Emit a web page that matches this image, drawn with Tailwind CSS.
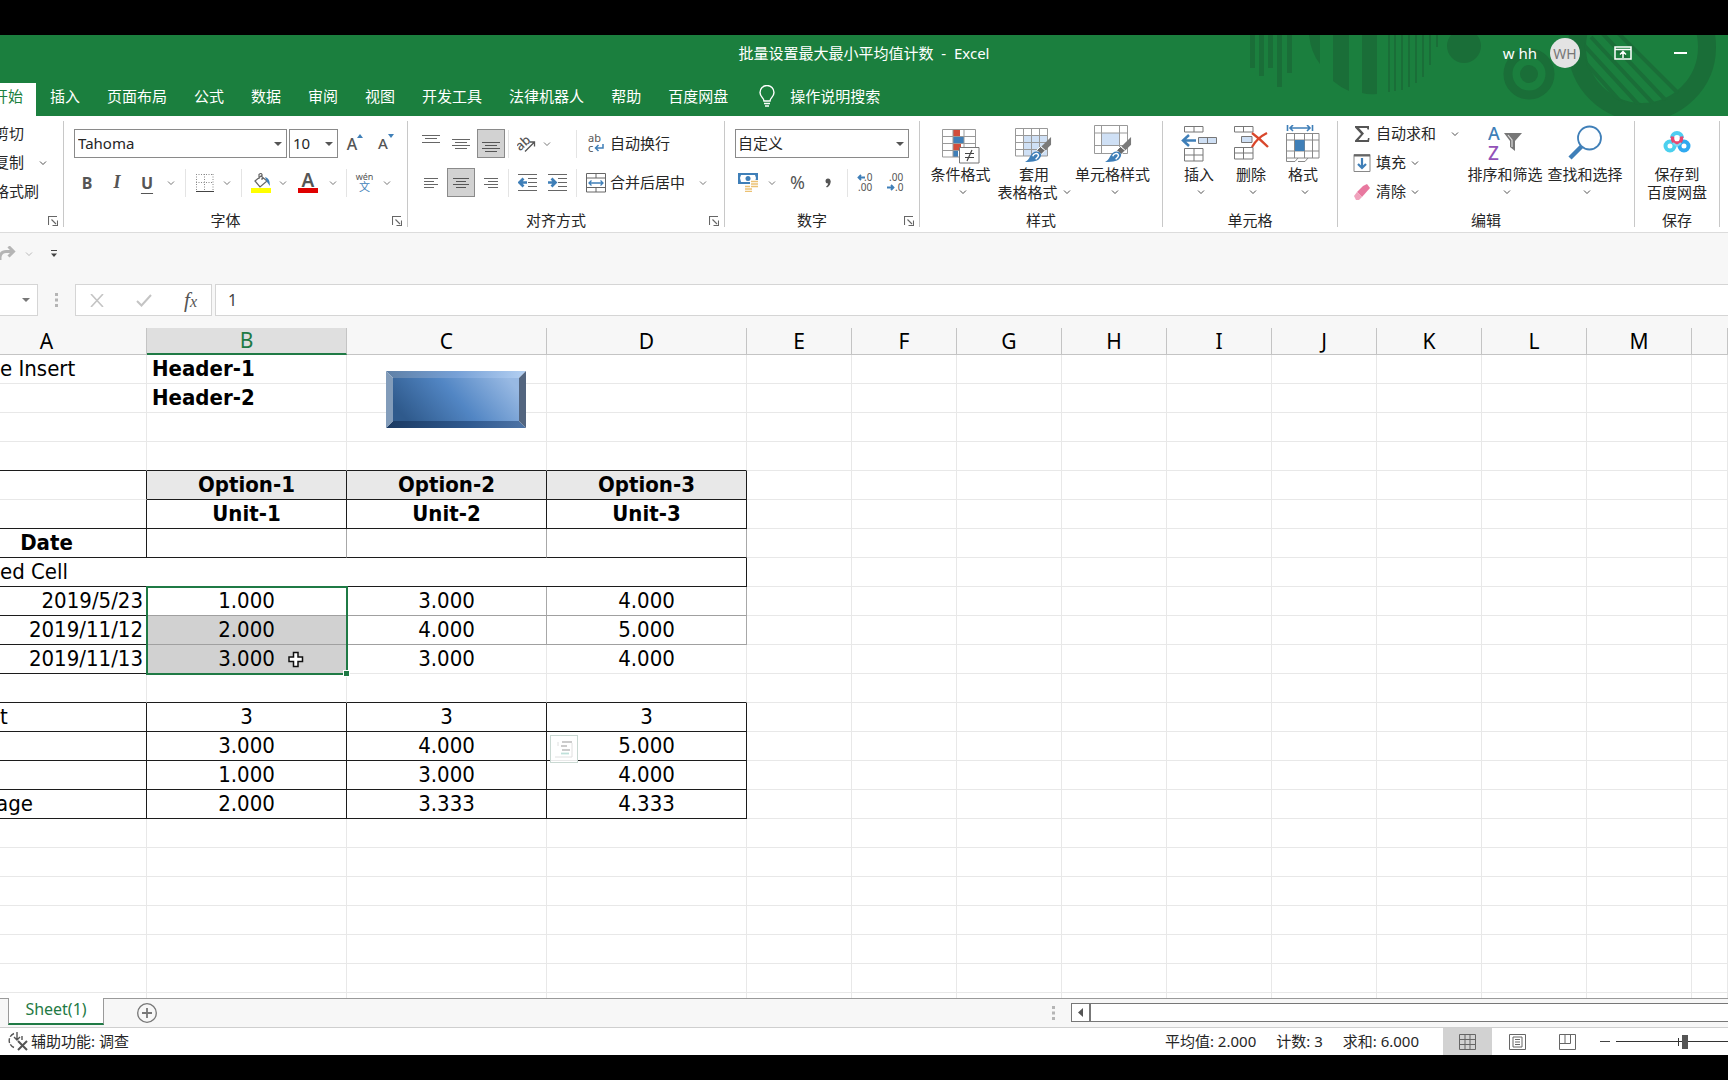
<!DOCTYPE html>
<html lang="zh-CN">
  <head>
    <meta charset="UTF-8" />
    <meta name="viewport" content="width=device-width, initial-scale=1.0" />
    <title>批量设置最大最小平均值计数 - Excel</title>
    <script src="https://cdn.jsdelivr.net/npm/@tailwindcss/browser@4"></script>
  </head>
  <body class="bg-black font-['Noto_Sans','Noto_Sans_CJK_SC',sans-serif] text-[15px] text-[#262626]">
    <!-- shared glyphs -->
    <svg class="hidden">
      <symbol id="chev" viewBox="0 0 8 6"><path d="M1 1.500 4 4.500 7 1.500" fill="none" stroke="currentColor" stroke-width="1" opacity=".8" /></symbol>
      <symbol id="tri" viewBox="0 0 8 4"><path d="M0 0H8L4 4Z" fill="currentColor" /></symbol>
      <symbol id="launch" viewBox="0 0 10 10"><path d="M.5 9V.5H9M3.500 3.500 8 8M9.500 4.500V9.500H4.500" fill="none" stroke="#666" stroke-width="1.1" /></symbol>
      <symbol id="brush" viewBox="0 0 28 28">
        <path d="M27 1v8l-6 6-4-4Z" fill="#7a7a7a" />
        <path d="M16 11l5 4-4 4-5-4Z" fill="#6a6a6a" stroke="#fff" />
        <path d="M12 16c4 0 6 3 4 6-2 4-7 5-16 5 4-2 4-4 6-7 1-2 3-4 6-4Z" fill="#3f7fb8" />
        <path d="M8 21c1-3 5-4 6-1 0 2-2 3-3 4" fill="none" stroke="#fff" stroke-width="1.500" />
      </symbol>
    </svg>

    <div class="flex h-screen flex-col overflow-hidden pt-[35px] pb-[25px]">
      <!-- title bar and tabs -->
      <header class="relative shrink-0 bg-[#1b7f3e] text-white">
        <svg class="absolute top-0 right-0" width="488" height="81" viewBox="0 0 488 81" fill="#1a6e38">
          <path d="M10 0h5v33h-5ZM19 0h5v41h-5ZM28 0h5v33h-5ZM37 0h5v52h-5ZM47 0h5v38h-5ZM69 0h11v29Q71 18 69 0ZM93 0h16v56Q100 52 93 46ZM122 0h15v59q-8 1-15-1Z" />
          <path d="M148 0h2v57h-2ZM154 0h2v56h-2ZM161 0h2v55h-2ZM168 0h2v52h-2ZM175 0h2v48h-2ZM182 0h2v42h-2ZM189 0h2v30h-2ZM196 0h2v12h-2Z" />
          <circle cx="224" cy="11" r="17" />
          <circle cx="289" cy="39" r="21" fill="none" stroke="#1a6e38" stroke-width="9" />
          <circle cx="289" cy="39" r="9" />
          <clipPath id="disc"><circle cx="402" cy="12" r="58" /></clipPath>
          <circle cx="402" cy="12" r="65" fill="none" stroke="#1a6e38" stroke-width="18" />
          <path d="M335 16 396 84M342 8 408 80M351 2 420 76M362-2 432 72M376-4 444 64" clip-path="url(#disc)" stroke="#1a6e38" stroke-width="4" />
        </svg>
        <div class="relative grid h-[48px] grid-cols-[1fr_auto_1fr] pb-3">
          <span></span>
          <h1 class="self-center whitespace-pre">批量设置最大最小平均值计数  -  Excel</h1>
          <div class="flex items-center justify-end pr-[41px]">
            <span>w hh</span>
            <span class="ml-[13px] flex size-[30px] items-center justify-center rounded-full bg-[#e3e3e3] text-[14px] text-[#777]">WH</span>
            <button class="ml-[34px]" aria-label="功能区显示选项">
              <svg width="18" height="14" viewBox="0 0 18 14" fill="none" stroke="#fff" stroke-width="1.500"><path d="M1 1H17V13H1ZM1 3.500H17M9 12V6M6 8.500 9 5.500 12 8.500" /></svg>
            </button>
            <button class="ml-[42px] h-[2px] w-[13px] bg-white" aria-label="最小化"></button>
          </div>
        </div>
        <nav class="relative flex h-[33px] items-start gap-[27px] leading-[26px] whitespace-nowrap">
          <a href="#" class="-mr-[13px] flex h-full w-[36px] overflow-hidden bg-white text-[#1b7f3e]"><span class="-ml-[7px]">开始</span></a>
          <a href="#">插入</a>
          <a href="#">页面布局</a>
          <a href="#">公式</a>
          <a href="#">数据</a>
          <a href="#">审阅</a>
          <a href="#">视图</a>
          <a href="#">开发工具</a>
          <a href="#">法律机器人</a>
          <a href="#">帮助</a>
          <a href="#">百度网盘</a>
          <a href="#" class="ml-[4px] flex items-center gap-[15px]">
            <svg width="16" height="22" viewBox="0 0 16 22" fill="none" stroke="#fff" stroke-width="1.400"><path d="M5 16c0-3-4-4-4-8.500a7 7 0 0 1 14 0C15 12 11 13 11 16ZM5 18.500H11M6 21H10" /></svg>
            操作说明搜索
          </a>
        </nav>
      </header>

      <!-- ribbon -->
      <div class="flex h-[117px] shrink-0 border-b border-[#dcdcdc] bg-white pt-[5px] whitespace-nowrap text-[#262626]">
        <section class="flex h-[106px] w-[64px] shrink-0 flex-col overflow-hidden border-r border-[#c8c8c8]">
          <div class="-mt-[2px] -ml-[6px] flex flex-col items-start leading-[29px]">
            <button>剪切</button>
            <button class="flex items-center">复制<svg class="ml-[15px]" width="8" height="6"><use href="#chev" /></svg></button>
            <button>格式刷</button>
          </div>
          <div class="mt-auto flex h-[12px] justify-end"><button class="flex w-[20px] items-center justify-center" aria-label="剪贴板设置"><svg width="10" height="10"><use href="#launch" /></svg></button></div>
        </section>

        <section class="flex h-[106px] w-[344px] shrink-0 flex-col border-r border-[#c8c8c8] pt-2">
          <div class="flex h-[29px] gap-[2px] pl-[10px]">
            <label class="relative w-[213px]">
              <select class="size-full appearance-none border border-[#8a8a8a] px-[3px]" aria-label="字体"><option>Tahoma</option></select>
              <svg class="absolute top-[13px] right-[5px] text-[#555]" width="8" height="4"><use href="#tri" /></svg>
            </label>
            <label class="relative w-[49px]">
              <select class="size-full appearance-none border border-[#8a8a8a] px-[3px]" aria-label="字号"><option>10</option></select>
              <svg class="absolute top-[13px] right-[5px] text-[#555]" width="8" height="4"><use href="#tri" /></svg>
            </label>
            <button class="flex w-[30px] items-center justify-center text-[16px] font-medium text-[#555]" aria-label="增大字号">A<svg class="mb-4" width="6" height="4"><path d="M0 4 3 0 6 4Z" fill="#3f7fb8" /></svg></button>
            <button class="flex w-[28px] items-center justify-center text-[15px] font-medium text-[#555]" aria-label="减小字号">A<svg class="mb-4" width="6" height="4"><path d="M0 0H6L3 4Z" fill="#3f7fb8" /></svg></button>
          </div>
          <div class="mt-[10px] flex h-[29px] items-center pl-2 text-[#555]">
            <button class="w-[30px] text-[16px] font-bold">B</button>
            <button class="w-[30px] font-['Liberation_Serif',serif] text-[18px] font-bold italic">I</button>
            <button class="w-[30px] text-[16px] font-bold underline underline-offset-4">U</button>
            <button class="flex w-[18px] justify-center" aria-label="下划线样式"><svg width="8" height="6"><use href="#chev" /></svg></button>
            <span class="mx-[5px] h-[28px] w-px bg-[#e4e4e4]"></span>
            <button class="flex w-[27px] justify-center" aria-label="边框"><svg width="18" height="18" fill="none" stroke="#888"><path d="M.5 0V17M8.500 0V17M17 0V17M0 .5H17M0 8.500H17" stroke-dasharray="1 1.500" /><path d="M0 17.500H18" stroke="#444" /></svg></button>
            <button class="flex w-[18px] justify-center" aria-label="边框样式"><svg width="8" height="6"><use href="#chev" /></svg></button>
            <span class="mx-[5px] h-[28px] w-px bg-[#e4e4e4]"></span>
            <button class="flex w-[27px] justify-center" aria-label="填充颜色"><svg width="20" height="20"><path d="M4 8 10 3 16 8 9 14ZM8 6V1.500q2-2 3 0V7" fill="#fff" stroke="#666" stroke-width="1.200" /><path d="M14 4q5 1 5 9l-3-4Z" fill="#3f7fb8" /><path d="M0 15H20V20H0Z" fill="#ff0" /></svg></button>
            <button class="flex w-[18px] justify-center" aria-label="填充颜色选项"><svg width="8" height="6"><use href="#chev" /></svg></button>
            <button class="flex w-[32px] flex-col items-center text-[19px] leading-[15px] font-semibold" aria-label="字体颜色">A<span class="h-[5px] w-[20px] bg-[#e00000]"></span></button>
            <button class="flex w-[18px] justify-center" aria-label="字体颜色选项"><svg width="8" height="6"><use href="#chev" /></svg></button>
            <span class="mx-[4px] h-[28px] w-px bg-[#e4e4e4]"></span>
            <button class="flex w-[27px] flex-col items-center text-[9px] leading-[8px]" aria-label="拼音指南">wén<span class="text-[11px] leading-[11px] text-[#3f7fb8]">文</span></button>
            <button class="flex w-[18px] justify-center" aria-label="拼音选项"><svg width="8" height="6"><use href="#chev" /></svg></button>
          </div>
          <div class="mt-auto flex h-[12px] text-center leading-[10px]"><h2 class="flex-1">字体</h2><button class="flex w-[20px] items-center justify-center" aria-label="字体设置"><svg width="10" height="10"><use href="#launch" /></svg></button></div>
        </section>

        <section class="flex h-[106px] w-[317px] shrink-0 flex-col border-r border-[#c8c8c8] pt-2">
          <div class="flex h-[29px] items-center pl-[9px] text-[#555]">
            <button class="mr-[2px] flex size-[28px] justify-center pt-[5px]" aria-label="顶端对齐"><svg width="18" height="10" stroke="#666"><path d="M0 .5H18M3 3.500H15M0 7.500H18" /></svg></button>
            <button class="mr-[2px] flex size-[28px] items-center justify-center" aria-label="垂直居中"><svg width="18" height="10" stroke="#666"><path d="M0 .5H18M3 3.500H15M0 6.500H18M3 9.500H15" /></svg></button>
            <button class="flex h-[29px] w-[28px] items-end justify-center border border-[#8a8a8a] bg-[#d2d2d2] pb-[5px]" aria-label="底端对齐"><svg width="18" height="10" stroke="#555"><path d="M0 .5H18M3 3.500H15M0 6.500H18M3 9.500H15" /></svg></button>
            <span class="mr-1 ml-[3px] h-[28px] w-px bg-[#e4e4e4]"></span>
            <button class="flex w-[28px] justify-center" aria-label="方向"><svg width="20" height="18"><text x="0" y="13" transform="rotate(-42 6 11)" font-size="13" font-weight="500" fill="#555">ab</text><path d="M8 16.500 17 7.500M13 7H17.500V11.500" fill="none" stroke="#555" stroke-width="1.300" /></svg></button>
            <button class="flex w-[12px] justify-center" aria-label="方向选项"><svg width="8" height="6"><use href="#chev" /></svg></button>
            <span class="mr-[9px] ml-[23px] h-[28px] w-px bg-[#e4e4e4]"></span>
            <button class="flex items-center gap-1 text-[#262626]"><svg width="20" height="20"><text x="2" y="8" font-size="11" fill="#555">ab</text><text x="2" y="18" font-size="11" fill="#555">c</text><path d="M17 10v4H10M12.500 11 9.500 14 12.500 17" fill="none" stroke="#3f7fb8" stroke-width="1.500" /></svg>自动换行</button>
          </div>
          <div class="mt-[10px] flex h-[29px] items-center pl-[9px] text-[#555]">
            <button class="mr-[2px] flex w-[28px] justify-center" aria-label="左对齐"><svg width="14" height="10" stroke="#666"><path d="M0 .5H14M0 3.500H10M0 6.500H14M0 9.500H10" /></svg></button>
            <button class="mr-[2px] flex h-[29px] w-[28px] items-center justify-center border border-[#8a8a8a] bg-[#d2d2d2]" aria-label="居中"><svg width="16" height="10" stroke="#555"><path d="M0 .5H16M3 3.500H13M0 6.500H16M3 9.500H13" /></svg></button>
            <button class="flex w-[28px] justify-center" aria-label="右对齐"><svg width="14" height="10" stroke="#666"><path d="M0 .5H14M4 3.500H14M0 6.500H14M4 9.500H14" /></svg></button>
            <span class="mr-1 ml-[3px] h-[28px] w-px bg-[#e4e4e4]"></span>
            <button class="mr-[2px] flex w-[28px] justify-center" aria-label="减少缩进"><svg width="19" height="17" stroke="#666"><path d="M0 .5H19M10 4.500H19M10 8.500H19M10 12.500H19M0 16.500H19" /><path d="M9 8.500H3M5.500 4.500 1.500 8.500 5.500 12.500" fill="none" stroke="#3f7fb8" stroke-width="2.700" /></svg></button>
            <button class="flex w-[28px] justify-center" aria-label="增加缩进"><svg width="19" height="17" stroke="#666"><path d="M0 .5H19M10 4.500H19M10 8.500H19M10 12.500H19M0 16.500H19" /><path d="M0 8.500H6M3.500 4.500 7.500 8.500 3.500 12.500" fill="none" stroke="#3f7fb8" stroke-width="2.700" /></svg></button>
            <span class="mr-[9px] ml-[5px] h-[28px] w-px bg-[#e4e4e4]"></span>
            <button class="flex items-center gap-1 text-[#262626]"><svg width="20" height="20" fill="none" stroke="#666"><path d="M.5 .5H19.500V19H.5ZM.5 5H19.500M.5 14.500H19.500M10 .5V5M10 14.500V19" /><path d="M3 10H17M5.500 7.500 3 10 5.500 12.500M14.500 7.500 17 10 14.500 12.500" stroke="#3f7fb8" stroke-width="1.300" /></svg>合并后居中</button>
            <button class="ml-[14px]" aria-label="合并选项"><svg width="8" height="6"><use href="#chev" /></svg></button>
          </div>
          <div class="mt-auto flex h-[12px] text-center leading-[10px]"><h2 class="flex-1">对齐方式</h2><button class="flex w-[20px] items-center justify-center" aria-label="对齐设置"><svg width="10" height="10"><use href="#launch" /></svg></button></div>
        </section>

        <section class="flex h-[106px] w-[195px] shrink-0 flex-col border-r border-[#c8c8c8] pt-2">
          <label class="relative ml-[10px] h-[29px] w-[174px]">
            <select class="size-full appearance-none border border-[#8a8a8a] px-[2px]" aria-label="数字格式"><option>自定义</option></select>
            <svg class="absolute top-[13px] right-[5px] text-[#555]" width="8" height="4"><use href="#tri" /></svg>
          </label>
          <div class="mt-[10px] flex h-[29px] items-center pl-[9px] text-[#555]">
            <button class="flex w-[28px] justify-center" aria-label="会计数字格式"><svg width="20" height="19"><path d="M0 0H20V11H0Z" fill="#3f7fb8" /><path d="M3 2H17L18 5 17 9H3L2 5Z" fill="#fff" /><circle cx="10" cy="5.500" r="2.500" fill="#3f7fb8" /><path d="M12 7H20V17H14V19H6V12H12Z" fill="#fff" /><path d="M13 8.500H20M13 11H20M13 13.500H20M7 13.500H12M7 16H14M7 18.500H14" stroke="#ecc173" stroke-width="1.500" /></svg></button>
            <button class="flex w-[20px] justify-center" aria-label="会计格式选项"><svg width="8" height="6"><use href="#chev" /></svg></button>
            <button class="w-[31px] text-[18px]">%</button>
            <button class="flex w-[29px] justify-center" aria-label="千位分隔"><svg width="6" height="10"><circle cx="3" cy="3" r="2.500" fill="#555" /><path d="M5.500 3Q6 7 2 9.500L1 8.500Q3.500 7 3 4Z" fill="#555" /></svg></button>
            <span class="mr-[3px] ml-[5px] h-[28px] w-px bg-[#e4e4e4]"></span>
            <button class="mr-[2px] flex w-[28px] justify-center" aria-label="增加小数位数"><svg width="16" height="20" font-size="10" fill="#555"><text x="7" y="8">.0</text><text x="1" y="18">.00</text><path d="M8 4.500H2M4 2 1.500 4.500 4 7" fill="none" stroke="#3f7fb8" stroke-width="1.800" /></svg></button>
            <button class="flex w-[28px] justify-center" aria-label="减少小数位数"><svg width="17" height="20" font-size="10" fill="#555"><text x="2" y="8">.00</text><text x="8" y="18">.0</text><path d="M0 14.500H6M4 12 6.500 14.500 4 17" fill="none" stroke="#3f7fb8" stroke-width="1.800" /></svg></button>
          </div>
          <div class="mt-auto flex h-[12px] text-center leading-[10px]"><h2 class="flex-1">数字</h2><button class="flex w-[20px] items-center justify-center" aria-label="数字设置"><svg width="10" height="10"><use href="#launch" /></svg></button></div>
        </section>

        <section class="flex h-[106px] w-[243px] shrink-0 flex-col border-r border-[#c8c8c8] pt-1">
          <div class="flex pl-[4px] leading-[18px]">
            <button class="flex w-[73px] flex-col items-center">
              <svg width="38" height="40" viewBox="0 0 38 40"><path d="M.5 4.500H34V32H.5Z" fill="#fff" /><path d="M11 4H18V11H11ZM11 18H19V25H11Z" fill="#d24e3c" /><path d="M11 11H22V18H11ZM11 25H16V32H11Z" fill="#3f7fb8" /><path d="M.5 4.500H33.500V32H.5ZM.5 11.500H33.500M.5 18.500H33.500M.5 25.500H33.500M11 4V32M22 4V32" fill="none" stroke="#999" /><path d="M17.500 22.500H37V38H17.500Z" fill="#fff" stroke="#777" /><path d="M23 28.500H32M23 32.500H32M30 25 25 36" stroke="#444" stroke-width="1.200" /></svg>
              条件格式
              <span class="flex h-[18px] items-center pl-1"><svg width="8" height="6"><use href="#chev" /></svg></span>
            </button>
            <button class="flex w-[74px] flex-col items-center">
              <svg width="38" height="40" viewBox="0 0 38 40"><path d="M8.500 10H32V31H8.500Z" fill="#cfe0f5" /><path d="M.5 3.500H32.500V31H.5ZM.5 10.500H32.500M.5 17.500H32.500M.5 24.500H32.500M8.500 4V31M16.500 4V31M24.500 4V31" fill="none" stroke="#999" /><use href="#brush" x="10" y="11" width="27" height="27" /></svg>
              套用
              <span class="flex h-[18px] items-center gap-[5px]">表格格式<svg width="8" height="6"><use href="#chev" /></svg></span>
            </button>
            <button class="flex w-[83px] flex-col items-center">
              <svg width="38" height="40" viewBox="0 0 38 40"><path d="M7 8H25V20H7Z" fill="#cfe0f5" /><path d="M.5 .5H33.500V28.500H.5ZM.5 8H33.500M.5 20.500H33.500M7.500 0V28M25.500 0V28" fill="none" stroke="#999" /><use href="#brush" x="11" y="11" width="27" height="27" /></svg>
              单元格样式
              <span class="flex h-[18px] items-center pl-1"><svg width="8" height="6"><use href="#chev" /></svg></span>
            </button>
          </div>
          <h2 class="mt-auto pb-[2px] text-center leading-[10px]">样式</h2>
        </section>

        <section class="flex h-[106px] w-[175px] shrink-0 flex-col border-r border-[#c8c8c8] pt-1">
          <div class="flex pl-[10px] leading-[18px]">
            <button class="flex w-[52px] flex-col items-center">
              <svg width="36" height="40" viewBox="0 0 36 40" fill="none" stroke="#777"><path d="M3.500 1.500H22V7H3.500ZM13 1.500V7M3.500 23.500H22V36H3.500ZM13 23.500V36M3.500 30H22" /><path d="M17.500 12.500H35.500V18.500H17.500ZM26.500 12.500V18.500" fill="#cfe0f5" /><path d="M15 15.500H2M8 10 2 15.500 8 21" stroke="#3f7fb8" stroke-width="2.500" /></svg>
              插入
              <span class="flex h-[18px] items-center pl-1"><svg width="8" height="6"><use href="#chev" /></svg></span>
            </button>
            <button class="flex w-[52px] flex-col items-center">
              <svg width="36" height="40" viewBox="0 0 36 40" fill="none" stroke="#777"><path d="M1.500 1.500H20V7H1.500ZM10.500 1.500V7M1.500 22.500H20V34H1.500ZM10.500 22.500V34M1.500 28H20" /><path d="M8.500 11.500H19V17.500H8.500Z" fill="#cfe0f5" /><path d="M19 8Q27 14 35 22M34 8Q24 13 19 22" stroke="#d9472b" stroke-width="2.300" /></svg>
              删除
              <span class="flex h-[18px] items-center pl-1"><svg width="8" height="6"><use href="#chev" /></svg></span>
            </button>
            <button class="flex w-[52px] flex-col items-center">
              <svg width="36" height="40" viewBox="0 0 36 40" fill="none" stroke="#888"><path d="M1.500 8.500H34V33H1.500ZM1.500 15H34M1.500 26H34M9.500 8.500V33M19.500 8.500V33M27.500 8.500V33M1.500 33V36.500H10L13 33M13 36.500H20L23 33" /><path d="M10 15H19.500V26H10Z" fill="#3f7fb8" stroke="none" /><path d="M2.500 0V6M27.500 0V6M5 3H25M8 0 5 3 8 6M22 0 25 3 22 6" stroke="#3f7fb8" stroke-width="1.600" /></svg>
              格式
              <span class="flex h-[18px] items-center pl-1"><svg width="8" height="6"><use href="#chev" /></svg></span>
            </button>
          </div>
          <h2 class="mt-auto pb-[2px] text-center leading-[10px]">单元格</h2>
        </section>

        <section class="flex h-[106px] w-[297px] shrink-0 flex-col border-r border-[#c8c8c8]">
          <div class="flex pl-[15px]">
            <div class="-mt-[2px] flex w-[112px] flex-col items-start leading-[29px]">
              <button class="flex items-center gap-[5px]"><svg width="18" height="18"><path d="M2 1H16V4.500H14.500L14 3H6L11 8.500 5.500 15H14.500L15 13H16.500L16 17H2V15.500L8 9 2 2.500Z" fill="#555" /></svg>自动求和<svg class="ml-[10px]" width="8" height="6"><use href="#chev" /></svg></button>
              <button class="flex items-center gap-[5px]"><svg width="18" height="18" fill="none"><path d="M1 .5H17V17.500H1Z" stroke="#888" /><path d="M1 1.500H17" stroke="#666" stroke-width="2" /><path d="M9 4V14M5 10 9 14 13 10" stroke="#3f7fb8" stroke-width="2.200" /></svg>填充<svg width="8" height="6"><use href="#chev" /></svg></button>
              <button class="flex items-center gap-[5px]"><svg width="18" height="16"><path d="M10 2 14 0 17 4 9 13 4 8Z" fill="#e8789f" /><path d="M4 8 9 13 6 16H3L1 12Z" fill="#f0a3bd" /></svg>清除<svg width="8" height="6"><use href="#chev" /></svg></button>
            </div>
            <div class="flex pt-1 leading-[18px]">
              <button class="flex w-[80px] flex-col items-center">
                <svg width="34" height="40" viewBox="0 0 34 40"><text x="0" y="15" font-size="18" font-weight="500" fill="#3f7fb8">A</text><text x="0" y="35" font-size="19" font-weight="500" fill="#9352b8">Z</text><path d="M16 8H34L27 16V26L22 22V16Z" fill="#777" /><path d="M20 10 24 15V22" fill="none" stroke="#ddd" stroke-width="1.200" /></svg>
                排序和筛选
                <span class="flex h-[18px] items-center pl-1"><svg width="8" height="6"><use href="#chev" /></svg></span>
              </button>
              <button class="flex w-[80px] flex-col items-center">
                <svg width="34" height="40" viewBox="0 0 34 40" fill="none" stroke="#3f7fb8"><circle cx="21.500" cy="13" r="11.500" fill="#fdfeff" stroke-width="1.800" /><path d="M13.500 21.500 2 33" stroke-width="4.500" /></svg>
                查找和选择
                <span class="flex h-[18px] items-center pl-1"><svg width="8" height="6"><use href="#chev" /></svg></span>
              </button>
            </div>
          </div>
          <h2 class="mt-auto pb-[2px] text-center leading-[10px]">编辑</h2>
        </section>

        <section class="flex h-[106px] w-[85px] shrink-0 flex-col items-center border-r border-[#c8c8c8] pt-1">
          <button class="flex flex-col items-center leading-[18px]">
            <svg width="28" height="40" viewBox="0 0 28 40" fill="none" stroke-width="4"><path d="M9 13A5 5 0 0 1 19 13" stroke="#4fcdf0" /><circle cx="7" cy="21" r="4.500" stroke="#4bd0ee" /><circle cx="21" cy="21" r="4.500" stroke="#2fa9f0" /><path d="M9.500 11.500Q9 18 14 18T18.500 11.500" stroke="#e8476f" stroke-width="3.500" /><path d="M10 18 14 21 18 18" stroke="#7fd8f2" stroke-width="2" /></svg>
            <span>保存到</span>
            <span>百度网盘</span>
          </button>
          <h2 class="mt-auto pb-[2px] leading-[10px]">保存</h2>
        </section>
      </div>

      <!-- quick access and formula bar -->
      <div class="shrink-0 bg-[#f7f7f7] pb-3">
        <div class="flex h-[51px] items-center pb-[10px]">
          <button aria-label="恢复"><svg width="16" height="16" fill="none" stroke="#b5b5b5" stroke-width="3"><path d="M0 14V11Q1 5.500 6 5.500H13M8.500 .5 13.500 5.500 8.500 10.500" /></svg></button>
          <button class="ml-[9px] text-[#aaa]" aria-label="恢复列表"><svg width="8" height="6"><use href="#chev" /></svg></button>
          <button class="ml-[18px]" aria-label="自定义快速访问工具栏"><svg width="6" height="8" fill="#444"><path d="M0 0H6V1H0ZM0 3.500H6L3 7Z" /></svg></button>
        </div>
        <div class="flex h-[32px]">
          <label class="relative w-[38px]">
            <input class="size-full border border-l-0 border-[#d5d5d5] bg-white" aria-label="名称框" />
            <svg class="absolute top-[14px] right-[8px] text-[#777]" width="8" height="4"><use href="#tri" /></svg>
          </label>
          <svg class="mx-[17px] self-center" width="3" height="14" fill="#b5b5b5"><path d="M0 0H3V3H0ZM0 5.500H3V8.500H0ZM0 11H3V14H0Z" /></svg>
          <div class="mr-[3px] flex w-[137px] items-center justify-between border border-[#d5d5d5] bg-white px-[14px]">
            <button aria-label="取消"><svg width="14" height="13" stroke="#c4c4c4" stroke-width="1.600"><path d="M1 0 13 13M13 0 1 13" /></svg></button>
            <button aria-label="输入"><svg width="16" height="13" fill="none" stroke="#c4c4c4" stroke-width="2"><path d="M1 7 5.500 11.500 15 1" /></svg></button>
            <button class="font-['Liberation_Serif',serif] text-[21px] leading-none text-[#555] italic">f<span class="text-[16px]">x</span></button>
          </div>
          <input class="min-w-0 flex-1 border border-r-0 border-[#d5d5d5] bg-white px-[12px] text-[16px] text-[#444]" aria-label="编辑栏" value="1" />
        </div>
      </div>

      <!-- worksheet -->
      <main class="relative min-h-0 flex-1 overflow-hidden bg-white font-['DejaVu_Sans_Condensed','DejaVu_Sans',sans-serif] text-[22px] text-black">
        <table class="w-full table-fixed border-separate border-spacing-0 leading-[26px]">
          <colgroup id="cols"></colgroup>
          <thead class="bg-[#f7f7f7] font-['Noto_Sans',sans-serif] text-[21px] leading-[25px]"><tr id="head"></tr></thead>
          <tbody id="body"></tbody>
        </table>
        <!-- bevelled shape on column C -->
        <button class="absolute top-[43px] left-[386px]" aria-label="按钮">
          <svg width="140" height="57" viewBox="0 0 140 57">
            <defs>
              <linearGradient id="face" x1="0" y1=".6" x2="1" y2=".3"><stop offset="0" stop-color="#2f5a8c" /><stop offset=".5" stop-color="#5286c4" /><stop offset="1" stop-color="#98b9e3" /></linearGradient>
              <linearGradient id="lit"><stop offset="0" stop-color="#5f80a6" /><stop offset=".5" stop-color="#76a0d6" /><stop offset="1" stop-color="#b4d0f2" /></linearGradient>
              <linearGradient id="shade"><stop offset="0" stop-color="#1b3a62" /><stop offset=".6" stop-color="#305a90" /><stop offset="1" stop-color="#4e74a6" /></linearGradient>
            </defs>
            <path d="M7 7H133V50H7Z" fill="url(#face)" />
            <path d="M0 0H140L133 7H7Z" fill="url(#lit)" />
            <path d="M0 57H140L133 50H7Z" fill="url(#shade)" />
            <path d="M0 0V57L7 50V7Z" fill="#829cba" />
            <path d="M140 0V57L133 50V7Z" fill="#53657f" />
          </svg>
        </button>
        <!-- selection frame B9:B11 -->
        <div class="absolute top-[258px] left-[146px] h-[89px] w-[202px] border-2 border-[#1f7a45]"><span class="absolute -right-1 -bottom-1 size-[7px] border border-white bg-[#1f7a45]"></span></div>
        <svg class="absolute top-[323px] left-[288px]" width="16" height="17" viewBox="0 0 16 17"><path d="M5.500 1.500H10V6H14.500V10.500H10V15.500H5.500V10.500H1V6H5.500Z" fill="#fff" stroke="#111" stroke-width="1.500" /></svg>
        <button class="absolute top-[407px] left-[550px] border border-[#c9d8d2] bg-white/90 p-[4px]" aria-label="粘贴选项"><svg width="18" height="18" stroke="#ccc" stroke-width="1.800"><path d="M7 2H17M6 6H12M7 10H15" /><path d="M6 13.500H14" stroke="#bfe0da" /><path d="M0 17H17V3M3 6V2" stroke="#e0e0e0" fill="none" stroke-width="1" /></svg></button>
      </main>

      <!-- sheet tabs -->
      <footer class="shrink-0">
        <div class="flex h-[30px] items-start border-t border-b border-t-[#9a9a9a] border-b-[#cfcfcf] bg-[#f7f7f7]">
          <button class="-mt-px ml-2 h-[27px] w-[96px] border-x border-b-2 border-x-[#9a9a9a] border-b-[#1f7a45] bg-white pb-1 text-[16px] leading-[20px] text-[#1f7a45]">Sheet(1)</button>
          <button class="mt-1 ml-[33px]" aria-label="新工作表"><svg width="20" height="20" fill="none" stroke="#777" stroke-width="1.300"><circle cx="10" cy="10" r="9.300" /><path d="M10 5V15M5 10H15" stroke-width="1.800" /></svg></button>
          <svg class="mt-[7px] mr-4 ml-auto" width="3" height="14" fill="#b5b5b5"><path d="M0 0H3V3H0ZM0 5.500H3V8.500H0ZM0 11H3V14H0Z" /></svg>
          <div class="mt-1 flex h-[19px] w-[38%] border border-r-0 border-[#777] bg-white">
            <button class="flex w-[19px] items-center justify-center border-r-2 border-[#777]" aria-label="向左滚动"><svg width="5" height="9"><path d="M5 0V9L0 4.500Z" fill="#555" /></svg></button>
          </div>
        </div>
        <div class="flex h-[27px] items-center overflow-hidden bg-white whitespace-nowrap">
          <svg class="ml-2" width="20" height="19" fill="none" stroke="#555" stroke-width="1.400"><path d="M6 1.500A7.500 7.500 0 0 0 6 15.500" stroke-dasharray="5 1.500" /><path d="M9 0V7M6 5 9 8 12 5M14 4V8" /><path d="M10 9 19 18M19 9 10 18" stroke-width="2" /></svg>
          <span class="ml-[3px]">辅助功能: 调查</span>
          <span class="ml-auto">平均值: 2.000</span>
          <span class="ml-5">计数: 3</span>
          <span class="ml-5">求和: 6.000</span>
          <button class="ml-6 flex h-full w-[49px] items-center justify-center bg-[#d2d2d2]" aria-label="普通"><svg width="17" height="16" fill="none" stroke="#666"><path d="M.5 .5H16.500V15.500H.5ZM.5 5.500H16.500M.5 10.500H16.500M6 .5V15.500M11 .5V15.500" /></svg></button>
          <button class="flex w-[50px] justify-center" aria-label="页面布局"><svg width="17" height="16" fill="none" stroke="#666"><path d="M.5 .5H16.500V15.500H.5ZM4 3H13V13H4ZM6 5.500H11M6 8H11M6 10.500H11" /></svg></button>
          <button class="flex w-[50px] justify-center" aria-label="分页预览"><svg width="17" height="16" fill="none" stroke="#666"><path d="M.5 .5H16.500V15.500H.5ZM.5 9.500H11.500V.5M6 .5V9.500" /></svg></button>
          <button class="ml-2 h-px w-[10px] bg-[#444]" aria-label="缩小"></button>
          <div class="relative ml-[6px] h-[14px] w-[112px]">
            <input type="range" value="49" class="block h-[14px] w-[140px] appearance-none bg-[linear-gradient(#333,#333)] bg-[length:100%_1px] bg-center bg-no-repeat [&::-webkit-slider-thumb]:h-[14px] [&::-webkit-slider-thumb]:w-[6px] [&::-webkit-slider-thumb]:appearance-none [&::-webkit-slider-thumb]:bg-[#555]" aria-label="显示比例" />
            <span class="absolute top-[3px] left-[62px] h-2 w-px bg-[#333]"></span>
          </div>
        </div>
      </footer>
    </div>

    <script>
      const letters = ["A", "B", "C", "D", "E", "F", "G", "H", "I", "J", "K", "L", "M", ""];

      // edge and fill codes used in the cell list
      const styles = {
        R: "border-r-[#1c1c1c]",
        r: "border-r-[#a8a8a8]",
        D: "border-b-[#1c1c1c]",
        d: "border-b-[#a0a0a0]",
        c: "text-center",
        e: "text-right pr-[3px]",
        b: "font-bold",
        h: "bg-[#e8e8e8]",
        s: "bg-[#d1d1d1]",
        l: "pl-[5px]",
        o: "pr-[53px]",
        i: "-indent-[4px]",
      };

      // row number -> [text, codes] for columns A to D
      const sheet = {
        1: [["e Insert", ""], ["Header-1", "bl"]],
        2: [["", ""], ["Header-2", "bl"]],
        4: [["", "D"], ["", "D"], ["", "D"], ["", "D"]],
        5: [["", "R"], ["Option-1", "RDcbh"], ["Option-2", "RDcbh"], ["Option-3", "RDcbh"]],
        6: [["", "RD"], ["Unit-1", "RDcb"], ["Unit-2", "RDcb"], ["Unit-3", "RDcb"]],
        7: [["Date", "RDcbo"], ["", "rD"], ["", "rD"], ["", "rD"]],
        8: [["ed Cell", "RD"]],
        9: [["2019/5/23", "RDe"], ["1.000", "dc"], ["3.000", "rdc"], ["4.000", "rdc"]],
        10: [["2019/11/12", "RDe"], ["2.000", "dcs"], ["4.000", "rdc"], ["5.000", "rdc"]],
        11: [["2019/11/13", "RDe"], ["3.000", "cs"], ["3.000", "c"], ["4.000", "c"]],
        12: [["", "D"], ["", "D"], ["", "D"], ["", "D"]],
        13: [["t", "RD"], ["3", "RDc"], ["3", "RDc"], ["3", "RDc"]],
        14: [["", "RD"], ["3.000", "RDc"], ["4.000", "RDc"], ["5.000", "RDc"]],
        15: [["", "RD"], ["1.000", "RDc"], ["3.000", "RDc"], ["4.000", "RDc"]],
        16: [["age", "RDi"], ["2.000", "RDc"], ["3.333", "RDc"], ["4.333", "RDc"]],
      };

      document.getElementById("cols").innerHTML = letters
        .map((l, i) => {
          if (i === 0) return `<col class="w-[147px]">`;
          if (i < 4) return `<col class="w-[200px]">`;
          return l ? `<col class="w-[105px]">` : `<col>`;
        })
        .join("");

      document.getElementById("head").innerHTML = letters
        .map((l) => {
          if (l === "B") return `<th class="h-[27px] border-r border-b-2 border-r-[#c4c4c4] border-b-[#1f7a45] bg-[#dfdfdf] p-0 font-normal text-[#1f7a45]">B</th>`;
          if (l === "A") return `<th class="h-[27px] border-r border-b border-[#c4c4c4] p-0 pr-[53px] font-normal">A</th>`;
          return `<th class="h-[27px] border-r border-b border-[#c4c4c4] p-0 font-normal">${l}</th>`;
        })
        .join("");

      let rows = "";
      for (let r = 1; r <= 23; r++) {
        const data = sheet[r] || [];
        rows += "<tr>";
        for (let c = 0; c < letters.length; c++) {
          // row 8 is merged from A to D
          if (r === 8 && c > 0 && c < 4) continue;
          const [text, codes] = data[c] || ["", ""];
          const extra = [...codes].map((k) => styles[k]).join(" ");
          const right = /r/i.test(codes) ? "" : "border-r-[#e8e8e8]";
          const bottom = /d/i.test(codes) ? "" : "border-b-[#e8e8e8]";
          const pad = /[elo]/.test(codes) ? "py-0" : "p-0";
          const span = r === 8 && c === 0 ? `colspan="4"` : "";
          rows += `<td ${span} class="h-[29px] overflow-hidden border-r border-b whitespace-nowrap ${pad} ${right} ${bottom} ${extra}">${text}</td>`;
        }
        rows += "</tr>";
      }
      document.getElementById("body").innerHTML = rows;
    </script>
  </body>
</html>
